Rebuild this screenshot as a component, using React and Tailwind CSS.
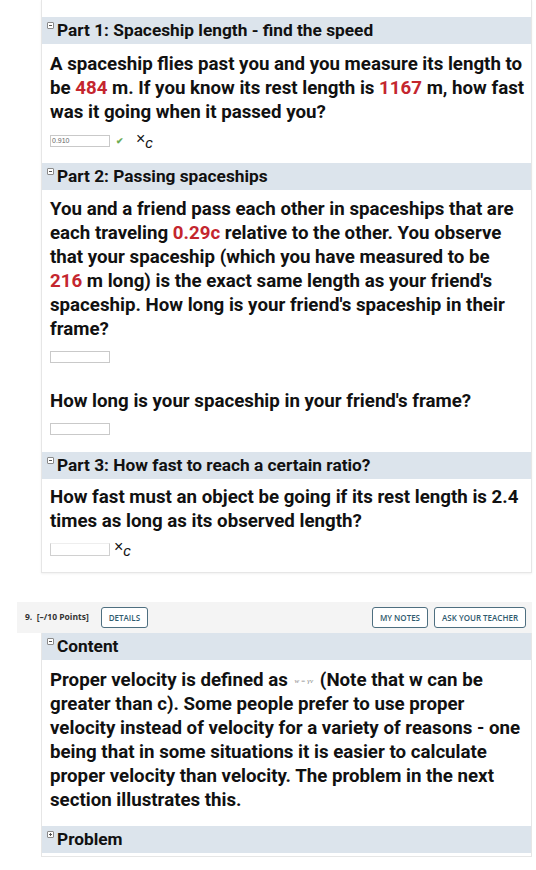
import React from 'react';

const Red = ({ children }) => <span className="text-[#c4262e]">{children}</span>;

const Toggle = ({ plus }) => (
    <span className="relative mt-[5px] ml-[5px] mr-[3px] inline-block h-[7px] w-[7px] shrink-0 rounded-[1px] border border-[#8a8a8a] bg-white">
        <span className="absolute left-[1px] top-[2px] h-px w-[3px] bg-[#555]" />
        {plus && <span className="absolute left-[2px] top-[1px] h-[3px] w-px bg-[#555]" />}
    </span>
);

const SectionHeader = ({ title, plus }) => (
    <div className="flex h-[27px] items-start bg-[#dce4ec]">
        <Toggle plus={plus} />
        <span className="text-[17.3px] font-bold leading-[27px] text-[#111]">{title}</span>
    </div>
);

const Input = ({ value }) => (
    <div className="h-[12px] w-[60px] shrink-0 border border-[#c9c9c9] bg-white pl-[1px] font-['Liberation_Sans'] text-[7px] font-normal leading-[10px] text-[#666]">
        {value}
    </div>
);

const Unit = () => (
    <span className="flex h-[12px] items-start font-['Liberation_Sans',sans-serif] font-normal text-[#111]">
        <span className="-mt-[3px] text-[16px] leading-[14px]">×</span>
        <span className="mt-[1px] text-[15px] italic leading-[14px]">c</span>
    </span>
);

const Button = ({ children }) => (
    <button className="h-[21px] rounded-[3px] border border-[#4e6f80] bg-white px-[7px] font-['Open_Sans',sans-serif] text-[8px] font-semibold uppercase leading-none text-[#2f5a6e]">
        {children}
    </button>
);

export default function App() {
    return (
        <div className="min-h-screen bg-white pb-4 font-['Roboto',sans-serif]">
            {/* question 8, parts 1-3 */}
            <div className="ml-[41px] mr-[4px] border-x border-b border-[#e6e6e6] pb-[16px] shadow-[0_1px_2px_rgba(0,0,0,0.06)]">
                <div className="h-[17px]" />
                <SectionHeader title="Part 1: Spaceship length - find the speed" />
                <div className="pl-2 pr-[2px] pt-2 text-[18.7px] font-bold leading-6 text-[#111]">
                    <p>
                        A spaceship flies past you and you measure its length to be <Red>484</Red> m. If you know its rest length is{' '}
                        <Red>1167</Red> m, how fast was it going when it passed you?
                    </p>
                    <div className="mt-[11px] flex h-[12px] items-center gap-[6px]">
                        <Input value="0.910" />
                        <span className="text-[9px] leading-none text-[#6aab52]">✔</span>
                        <span className="ml-[6px]"><Unit /></span>
                    </div>
                </div>

                <div className="h-[16px]" />
                <SectionHeader title="Part 2: Passing spaceships" />
                <div className="pl-2 pr-[2px] pt-[7px] text-[18.7px] font-bold leading-6 text-[#111]">
                    <p>
                        You and a friend pass each other in spaceships that are each traveling <Red>0.29c</Red> relative to the other. You
                        observe that your spaceship (which you have measured to be <span className="whitespace-nowrap"><Red>216</Red> m</span> long)
                        is the exact same length as your friend's spaceship. How long is your friend's spaceship in their frame?
                    </p>
                    <div className="mt-[10px]"><Input /></div>
                    <p className="mt-[26px]">How long is your spaceship in your friend's frame?</p>
                    <div className="mt-[10px]"><Input /></div>
                </div>

                <div className="h-[17px]" />
                <SectionHeader title="Part 3: How fast to reach a certain ratio?" />
                <div className="pl-2 pr-[2px] pt-[6px] text-[18.7px] font-bold leading-6 text-[#111]">
                    <p>How fast must an object be going if its rest length is 2.4 times as long as its observed length?</p>
                    <div className="mt-[10px] flex h-[13px] items-start gap-[4px]">
                        <div className="h-[13px] w-[60px] border border-[#d0d0d0] border-t-[#eee]" />
                        <Unit />
                    </div>
                </div>
            </div>

            {/* question 9 */}
            <div className="mt-[29px] ml-[17px] mr-[4px] flex h-[31px] items-center bg-[#f4f4f4] pl-[8px] pr-[6px]">
                <span className="font-['Open_Sans',sans-serif] text-[8.5px] font-bold text-[#333]">9.&nbsp; [–/10 Points]</span>
                <span className="ml-[12px] flex"><Button>Details</Button></span>
                <div className="ml-auto flex gap-[6px]">
                    <Button>My Notes</Button>
                    <Button>Ask Your Teacher</Button>
                </div>
            </div>
            <div className="ml-[41px] mr-[4px] border-x border-b border-[#e6e6e6] pb-[3px]">
                <SectionHeader title="Content" />
                <div className="pl-2 pr-[2px] pt-2 text-[18.7px] font-bold leading-6 text-[#111]">
                    <p>
                        Proper velocity is defined as{' '}
                        <span className="mx-[2px] inline-block align-middle font-['Liberation_Serif',serif] text-[7px] font-normal italic leading-none text-[#888]">
                            w = γv
                        </span>{' '}
                        (Note that w can be greater than c). Some people prefer to use proper velocity instead of velocity for a variety of
                        reasons - one being that in some situations it is easier to calculate proper velocity than velocity. The problem in the
                        next section illustrates this.
                    </p>
                </div>
                <div className="h-[14px]" />
                <SectionHeader title="Problem" plus />
            </div>
        </div>
    );
}
